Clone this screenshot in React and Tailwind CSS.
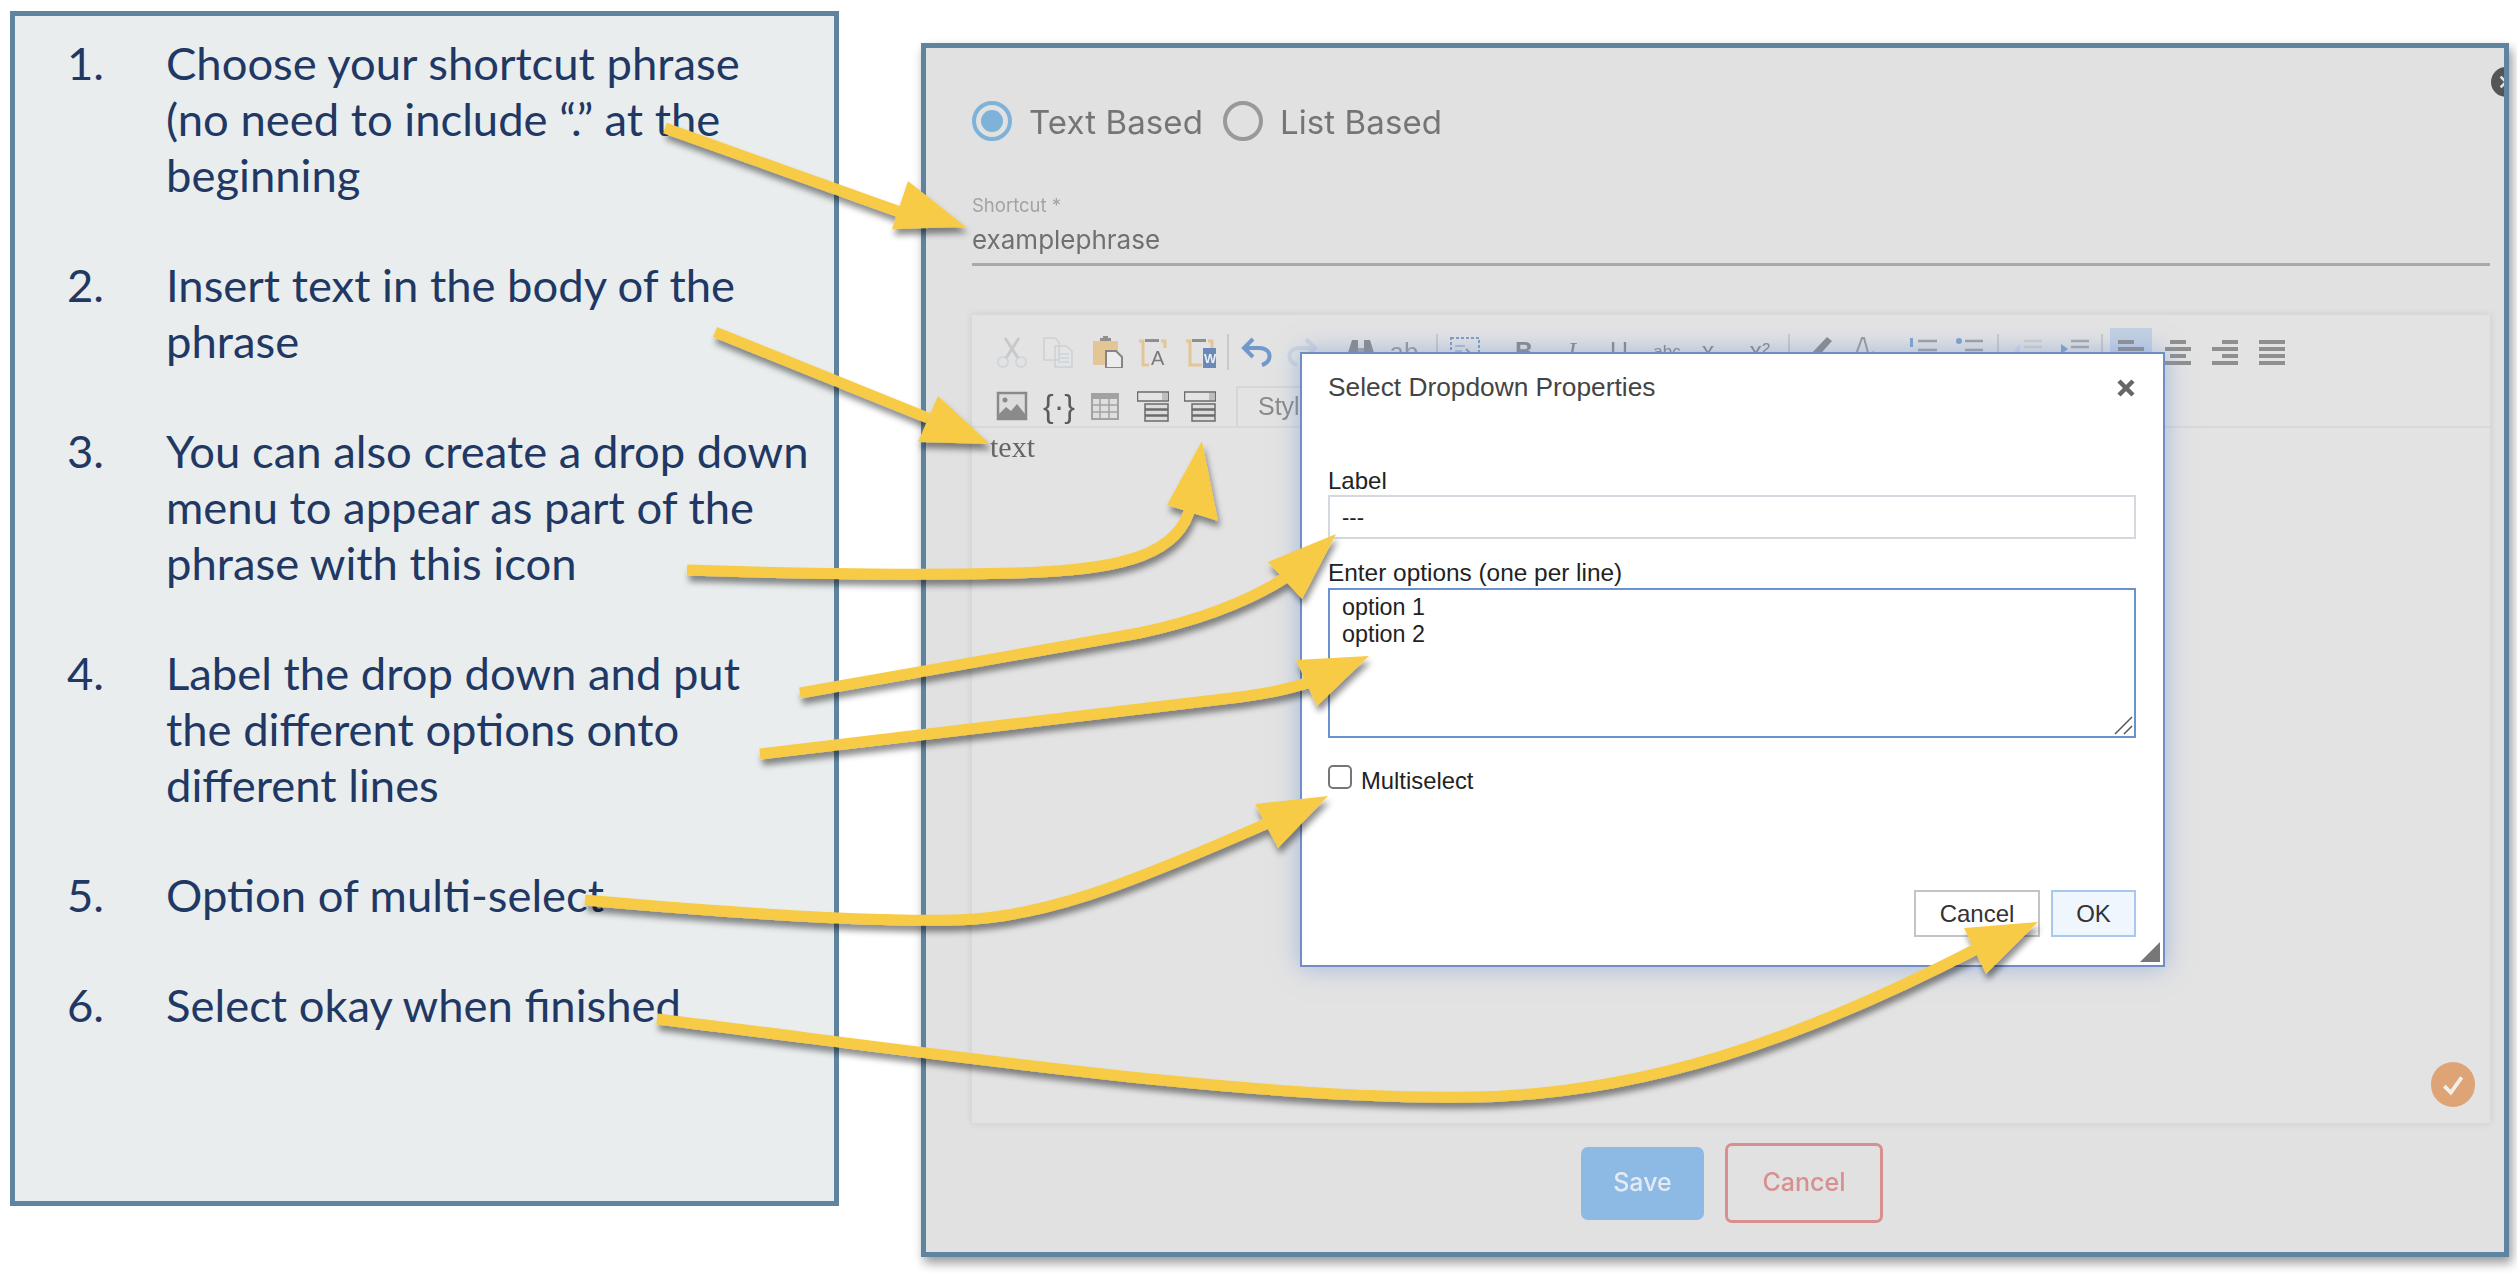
import React from 'react'

const STEPS = [
  { n: '1.', lines: ['Choose your shortcut phrase', '(no need to include “.” at the', 'beginning'] },
  { n: '2.', lines: ['Insert text in the body of the', 'phrase'] },
  { n: '3.', lines: ['You can also create a drop down', 'menu to appear as part of the', 'phrase with this icon'] },
  { n: '4.', lines: ['Label the drop down and put', 'the different options onto', 'different lines'] },
  { n: '5.', lines: ['Option of multi-select'] },
  { n: '6.', lines: ['Select okay when finished'] },
]

function Ico({ children }) {
  return <svg viewBox="0 0 32 32" className="w-[32px] h-[32px] block">{children}</svg>
}

const Scissors = () => (
  <Ico>
    <g fill="none" stroke="#cfd6de" strokeWidth="2">
      <circle cx="7" cy="26" r="5" />
      <circle cx="25" cy="26" r="5" />
    </g>
    <path d="M10 22 L23 2 M22 22 L9 2" stroke="#c9c9c9" strokeWidth="3" />
  </Ico>
)
const Copy = () => (
  <Ico>
    <path d="M2 2 H13 L17 6 V24 H2 Z M13 10 H24 L30 15 V31 H13 Z" fill="#e4e4e4" stroke="#cfcfcf" strokeWidth="1.5" />
    <path d="M16 18 H27 M16 22 H27 M16 26 H27" stroke="#c6d3e0" strokeWidth="1.5" />
  </Ico>
)
const Paste = () => (
  <Ico>
    <path d="M2 5 H27 V29 H2 Z" fill="#e3c596" />
    <path d="M9 5 H20 V2 H9 Z M12 2 V0 H17 V2" fill="#8f8f8f" />
    <path d="M15 15 H25 L31 21 V32 H15 Z" fill="#ececec" stroke="#858585" strokeWidth="2" />
  </Ico>
)
const PasteText = () => (
  <Ico>
    <path d="M2 5 H6 V29 H12 M24 5 H28 V12" fill="none" stroke="#e3c596" strokeWidth="3" />
    <path d="M8 6 H22 V3 H8 Z" fill="#8f8f8f" />
    <text x="14" y="29" fontFamily="Liberation Sans, sans-serif" fontSize="20" fill="#7a7a7a">A</text>
  </Ico>
)
const PasteWord = () => (
  <Ico>
    <path d="M2 5 H6 V29 H18 M24 5 H28 V12" fill="none" stroke="#e3c596" strokeWidth="3" />
    <path d="M8 6 H22 V3 H8 Z" fill="#8f8f8f" />
    <path d="M19 12 H32 V32 H19 Z" fill="#6a88b8" />
    <text x="20" y="27" fontFamily="Liberation Sans, sans-serif" fontSize="13" fontWeight="700" fill="#e8eef5">W</text>
  </Ico>
)
const Undo = () => (
  <Ico>
    <path d="M4 12 H18 C26 12 30 17 28 23 C27 26 24 28 21 29" fill="none" stroke="#7199c9" strokeWidth="4" />
    <path d="M12 3 L3 12 L12 21" fill="none" stroke="#7199c9" strokeWidth="4" />
  </Ico>
)
const Redo = () => (
  <Ico>
    <path d="M28 12 H14 C6 12 2 17 4 23 C5 26 8 28 11 29" fill="none" stroke="#cdd5df" strokeWidth="4" />
    <path d="M20 3 L29 12 L20 21" fill="none" stroke="#cdd5df" strokeWidth="4" />
  </Ico>
)
const Binoculars = () => (
  <Ico>
    <path d="M7 4 H13 V16 H16 V16 H13 V28 H2 V20 Z M19 4 H25 L30 20 V28 H19 Z" fill="#8b8b8b" />
    <path d="M13 12 H19 V18 H13 Z" fill="#a5a5a5" />
  </Ico>
)
const SelectAll = () => (
  <Ico>
    <rect x="2" y="2" width="28" height="28" fill="none" stroke="#7f9dc7" strokeWidth="2" strokeDasharray="3 2" />
    <path d="M6 10 H16 M6 15 H13 M6 20 H13 M6 25 H13" stroke="#b2bfd0" strokeWidth="2" />
    <path d="M17 13 L28 24 L22 24 L24 31" fill="none" stroke="#9a9a9a" strokeWidth="2" />
  </Ico>
)
const Glyph = ({ children, bold, serif, small }) => (
  <span
    className={`flex items-center justify-center w-[32px] h-[32px] text-[#8a8a8a] ${small ? 'text-[17px]' : 'text-[25px]'} ${bold ? 'font-bold' : ''} ${serif ? 'font-["Liberation_Serif",serif] italic' : 'font-["Liberation_Sans",sans-serif]'}`}
  >
    {children}
  </span>
)
const Brush = () => (
  <Ico>
    <path d="M26 1 L31 5 L15 23 L9 19 Z" fill="#8b8b8b" />
    <path d="M8 21 L14 25 L8 31 L1 31 Z" fill="#8b8b8b" />
  </Ico>
)
const TextColor = () => (
  <Ico>
    <path d="M4 24 L12 2 H14 L20 24" fill="none" stroke="#9a9a9a" strokeWidth="2" />
    <path d="M14 30 L23 14 L32 30 Z" fill="#e6a9b5" />
  </Ico>
)
const Lines = ({ rows, color = '#8f8f8f' }) => (
  <Ico>
    {rows.map(([x1, x2, y], i) => (
      <rect key={i} x={x1} y={y} width={x2 - x1} height="4" fill={color} />
    ))}
  </Ico>
)
const Numbered = () => (
  <Ico>
    <path d="M3 2 H6 V11 H3 Z M3 20 H8 V30 H3 Z" fill="#7fa2cf" />
    <path d="M11 5 H30 M11 14 H30 M11 24 H30" stroke="#a0a0a0" strokeWidth="2.5" />
  </Ico>
)
const Bulleted = () => (
  <Ico>
    <circle cx="6" cy="5" r="3" fill="#7fa2cf" />
    <circle cx="6" cy="24" r="3" fill="#7fa2cf" />
    <path d="M12 5 H30 M12 14 H30 M12 24 H30" stroke="#a0a0a0" strokeWidth="2.5" />
  </Ico>
)
const Outdent = () => (
  <Ico>
    <path d="M12 5 H30 M12 11 H30 M2 20 H30" stroke="#d0d0d0" strokeWidth="2.5" />
    <path d="M8 8 L2 14 L8 18 Z" fill="#cfd8e4" />
  </Ico>
)
const Indent = () => (
  <Ico>
    <path d="M12 5 H30 M12 11 H30 M2 20 H30" stroke="#a8a8a8" strokeWidth="2.5" />
    <path d="M2 8 L9 13 L2 18 Z" fill="#7fa2cf" />
  </Ico>
)
const ImageIcon = () => (
  <Ico>
    <rect x="2" y="3" width="28" height="26" fill="#dcdcdc" stroke="#8a8a8a" strokeWidth="2.5" />
    <circle cx="9" cy="10" r="2.5" fill="#8a8a8a" />
    <path d="M3 28 V24 L10 17 L15 21 L21 14 L29 24 V28 Z" fill="#8a8a8a" />
  </Ico>
)
const Placeholder = () => (
  <span className="flex items-center justify-center w-[32px] h-[32px] text-[32px] leading-none text-[#5c5c5c] font-['Liberation_Sans',sans-serif]">
    {'{·}'}
  </span>
)
const TableIcon = () => (
  <Ico>
    <rect x="3" y="4" width="26" height="25" fill="#dedede" stroke="#a2a2a2" strokeWidth="2" />
    <rect x="3" y="4" width="26" height="5" fill="#a2a2a2" />
    <path d="M3 15 H29 M3 22 H29 M11 9 V29 M20 9 V29" stroke="#a2a2a2" strokeWidth="1.5" />
  </Ico>
)
const SelectIcon = () => (
  <Ico>
    <rect x="0.5" y="2" width="31" height="9" fill="#e4e4e4" stroke="#6b6b6b" strokeWidth="1.5" />
    <rect x="25" y="3" width="6" height="7" fill="#bdbdbd" />
    <path d="M8 14 H31 V19 H8 Z M8 20 H31 V25 H8 Z M8 26 H31 V31 H8 Z" fill="#dcdcdc" stroke="#6b6b6b" strokeWidth="1.5" />
  </Ico>
)

function Sep({ cls }) {
  return <span className={`w-[2px] h-[36px] bg-[#c9c9c9] ${cls}`} />
}

function Toolbar() {
  return (
    <div className="h-[113px] border-b-2 border-[#d9d9d9] pt-[14px] flex flex-col">
      <div className="h-[46px] flex items-center pl-[24px]">
        <span><Scissors /></span>
        <span className="ml-[14px]"><Copy /></span>
        <span className="ml-[17px]"><Paste /></span>
        <span className="ml-[14px]"><PasteText /></span>
        <span className="ml-[15px]"><PasteWord /></span>
        <Sep cls="ml-[11px]" />
        <span className="ml-[12px]"><Undo /></span>
        <span className="ml-[13px]"><Redo /></span>
        <span className="ml-[27px]"><Binoculars /></span>
        <span className="ml-[11px] w-[32px] text-[26px] text-center text-[#9a9a9a] font-['Liberation_Sans',sans-serif]">ab</span>
        <Sep cls="ml-[16px]" />
        <span className="ml-[11px]"><SelectAll /></span>
        <span className="ml-[27px]"><Glyph bold>B</Glyph></span>
        <span className="ml-[16px]"><Glyph serif>I</Glyph></span>
        <span className="ml-[15px]"><Glyph>U</Glyph></span>
        <span className="ml-[16px]"><Glyph small>abc</Glyph></span>
        <span className="ml-[9px]"><Glyph>x</Glyph></span>
        <span className="ml-[20px]"><Glyph>x²</Glyph></span>
        <Sep cls="ml-[12px]" />
        <span className="ml-[11px]"><Brush /></span>
        <span className="ml-[17px]"><TextColor /></span>
        <span className="ml-[25px]"><Numbered /></span>
        <span className="ml-[14px]"><Bulleted /></span>
        <Sep cls="ml-[12px]" />
        <span className="ml-[13px]"><Outdent /></span>
        <span className="ml-[15px]"><Indent /></span>
        <Sep cls="ml-[10px]" />
        <span className="ml-[7px] w-[42px] h-[48px] bg-[#c3d0e3] flex items-center justify-center">
          <Lines rows={[[3, 19, 4], [3, 29, 11], [3, 19, 18], [3, 29, 25]]} />
        </span>
        <span className="ml-[10px]"><Lines rows={[[8, 24, 4], [3, 29, 11], [8, 24, 18], [3, 29, 25]]} /></span>
        <span className="ml-[15px]"><Lines rows={[[13, 29, 4], [3, 29, 11], [13, 29, 18], [3, 29, 25]]} /></span>
        <span className="ml-[15px]"><Lines rows={[[3, 29, 4], [3, 29, 11], [3, 29, 18], [3, 29, 25]]} /></span>
      </div>
      <div className="mt-[11px] h-[42px] flex items-center pl-[24px]">
        <span><ImageIcon /></span>
        <span className="ml-[15px]"><Placeholder /></span>
        <span className="ml-[14px]"><TableIcon /></span>
        <span className="ml-[16px]"><SelectIcon /></span>
        <span className="ml-[15px]"><SelectIcon /></span>
        <span className="ml-[20px] self-stretch w-[120px] border-l-2 border-t-2 border-[#d6d6d6] pl-[20px] flex items-center text-[25px] text-[#8a8a8a] font-['Liberation_Sans',sans-serif]">
          Styles
        </span>
      </div>
    </div>
  )
}

function Radio({ checked, label }) {
  return (
    <div className="flex items-center gap-[17px]">
      <span className={`w-[40px] h-[40px] rounded-full border-[4px] flex items-center justify-center ${checked ? 'border-[#7fb2d8]' : 'border-[#999999]'}`}>
        {checked && <span className="w-[22px] h-[22px] rounded-full bg-[#7fb2d8]" />}
      </span>
      <span className="pt-[2px] text-[33px] leading-none tracking-[0.1px] text-[#757575]">{label}</span>
    </div>
  )
}

function PhraseForm() {
  return (
    <div className="h-full pl-[46px] pr-[14px] pt-[53px] blur-[0.5px] font-['Inter',sans-serif]">
      <div className="flex items-center gap-[20px] h-[40px]">
        <Radio checked label="Text Based" />
        <Radio label="List Based" />
      </div>
      <div className="mt-[53px] border-b-[3px] border-[#aaaaaa] h-[72px]">
        <div className="h-[22px] text-[18.5px] leading-[22px] text-[#a3a3a3]">Shortcut *</div>
        <div className="mt-[6px] h-[36px] text-[26px] leading-[36px] text-[#707070]">examplephrase</div>
      </div>
      <div className="mt-[49px] h-[808px] relative bg-[#e3e3e3] shadow-[0_0_8px_rgba(0,0,0,0.1)]">
        <Toolbar />
        <p className="pl-[18px] text-[30px] leading-[38px] text-[#666666] font-['Liberation_Serif',serif]">text</p>
        <span className="absolute left-[1459px] top-[747px] w-[44px] h-[45px] rounded-full bg-[#dfa476] flex items-center justify-center">
          <svg viewBox="0 0 24 24" className="w-[26px] h-[26px]" fill="none" stroke="#f0efe9" strokeWidth="3.5">
            <path d="M4 13 L10 19 L20 5" />
          </svg>
        </span>
      </div>
      <div className="mt-[20px] ml-[609px] flex items-center gap-[21px]">
        <button className="w-[123px] h-[73px] rounded-[7px] bg-[#8db9e5] text-[25px] font-medium text-[#e3eaf1]">Save</button>
        <button className="w-[158px] h-[80px] rounded-[7px] border-[3px] border-[#d88f8f] text-[25px] font-medium text-[#d88f8f]">Cancel</button>
      </div>
    </div>
  )
}

function DropdownDialog() {
  return (
    <div className="absolute left-[374px] top-[304px] w-[865px] h-[615px] bg-white border-2 border-[#6f8fc4] shadow-[0_0_24px_rgba(110,145,210,0.55)] pl-[26px] pr-[27px] pt-[19px] pb-[28px] flex flex-col font-['Liberation_Sans',sans-serif]">
      <div className="h-[30px] flex items-center justify-between">
        <span className="text-[26.3px] text-[#444444]">Select Dropdown Properties</span>
        <svg viewBox="0 0 20 20" className="w-[20px] h-[20px]" fill="none" stroke="#666666" strokeWidth="4.5">
          <path d="M3 3 L17 17 M17 3 L3 17" />
        </svg>
      </div>
      <label className="mt-[65px] h-[26px] text-[24px] leading-[26px] text-[#222222]">Label</label>
      <div className="mt-[1px] h-[44px] border-2 border-[#d3d9de] pl-[12px] flex items-center text-[22px] text-[#222222]">---</div>
      <label className="mt-[21px] h-[26px] text-[24.4px] leading-[26px] text-[#222222]">Enter options (one per line)</label>
      <div className="mt-[2px] h-[150px] relative border-2 border-[#6a92cf] pl-[12px] pt-[4px] text-[23.3px] leading-[27px] text-[#222222]">
        <div>option 1</div>
        <div>option 2</div>
        <svg viewBox="0 0 20 20" className="absolute right-[1px] bottom-[1px] w-[20px] h-[20px]" stroke="#555555" strokeWidth="1.5">
          <path d="M2 19 L19 2 M11 19 L19 11" />
        </svg>
      </div>
      <div className="mt-[27px] flex items-start gap-[9px]">
        <span className="w-[24px] h-[24px] rounded-[5px] border-2 border-[#767676] bg-white" />
        <span className="mt-[3px] text-[23.8px] leading-[26px] text-[#222222]">Multiselect</span>
      </div>
      <div className="mt-auto flex justify-end gap-[11px]">
        <button className="w-[126px] h-[47px] border-2 border-[#c4c4c4] text-[24px] text-[#333333]">Cancel</button>
        <button className="w-[85px] h-[47px] border-2 border-[#a9c8ee] bg-[#f0f6fe] text-[24px] text-[#333333]">OK</button>
      </div>
      <span className="absolute right-[3px] bottom-[3px] w-0 h-0 border-l-[20px] border-l-transparent border-b-[20px] border-b-[#777777]" />
    </div>
  )
}

const ARROWS = [
  { d: 'M665 128 L900 212', head: '966,227 908,181 892,229' },
  { d: 'M715 332 L928 418', head: '990,444 938,396 918,442' },
  { d: 'M687 570 C800 574 950 576 1040 572 C1120 568 1180 555 1191 505', head: '1202,441 1167,505 1218,521' },
  { d: 'M800 693 L1139 633 C1200 620 1250 600 1285 578', head: '1336,534 1268,562 1302,599' },
  { d: 'M760 754 L1240 697 Q1280 692 1310 682', head: '1369,656 1296,660 1317,706' },
  { d: 'M585 900 C720 912 860 922 955 920 C1040 918 1120 888 1270 822', head: '1328,796 1255,804 1278,848' },
  { d: 'M657 1019 C950 1055 1250 1100 1470 1097 C1640 1095 1800 1040 1978 948', head: '2038,922 1964,928 1986,974' },
]

function Arrows() {
  return (
    <svg viewBox="0 0 2517 1274" className="absolute inset-0 w-[2517px] h-[1274px] pointer-events-none">
      <defs>
        <filter id="arrowShadow" x="-10%" y="-30%" width="120%" height="160%">
          <feDropShadow dx="2" dy="6" stdDeviation="3" floodColor="#000000" floodOpacity="0.45" />
        </filter>
      </defs>
      {ARROWS.map((a, i) => (
        <g key={i} filter="url(#arrowShadow)">
          <path d={a.d} fill="none" stroke="#f7cb45" strokeWidth="11" />
          <polygon points={a.head} fill="#f7cb45" />
        </g>
      ))}
    </svg>
  )
}

export default function App() {
  return (
    <div className="relative w-[2517px] h-[1274px] bg-white overflow-hidden flex items-start">
      <div className="ml-[10px] mt-[11px] w-[829px] h-[1195px] border-[5px] border-[#5f84a0] bg-[#e9edee] pl-[52px] pt-[19px] font-['Lato',sans-serif] text-[45.4px] leading-[56px] text-[#1f3864]">
        <ol className="flex flex-col gap-[54px]">
          {STEPS.map((s) => (
            <li key={s.n} className="flex">
              <span className="w-[99px] shrink-0">{s.n}</span>
              <span>
                {s.lines.map((l) => (
                  <span key={l} className="block whitespace-nowrap">{l}</span>
                ))}
              </span>
            </li>
          ))}
        </ol>
      </div>
      <div className="ml-[82px] mt-[43px] w-[1588px] h-[1214px] relative overflow-hidden border-[5px] border-[#5f84a0] bg-[#e1e1e1] shadow-[3px_6px_10px_rgba(0,0,0,0.4)]">
        <PhraseForm />
        <span className="absolute left-[1565px] top-[19px] w-[30px] h-[30px] rounded-full bg-[#555555] blur-[0.5px] flex items-center justify-center">
          <svg viewBox="0 0 20 20" className="w-[18px] h-[18px]" fill="none" stroke="#e1e1e1" strokeWidth="3">
            <path d="M4 4 L16 16 M16 4 L4 16" />
          </svg>
        </span>
        <DropdownDialog />
      </div>
      <Arrows />
    </div>
  )
}
